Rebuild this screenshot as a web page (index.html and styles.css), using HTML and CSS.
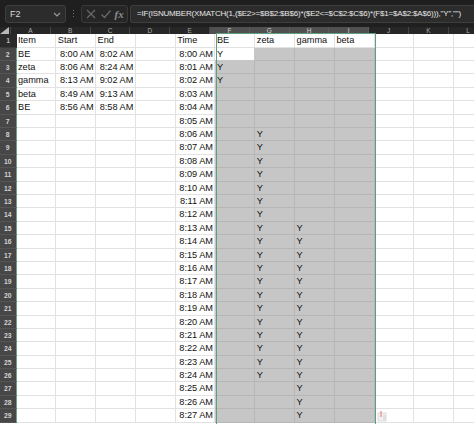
FILE: index.html
```html
<!DOCTYPE html>
<html>
<head>
<meta charset="utf-8">
<link rel="stylesheet" href="styles.css">
</head>
<body>
<div class="app">
  <div class="fbar">
    <div class="namebox"><span>F2</span><svg class="chev" width="8" height="5" viewBox="0 0 8 5"><path d="M1 1 L4 4 L7 1" fill="none" stroke="#9a9a9a" stroke-width="1.2"/></svg></div>
    <div class="dots"><i></i><i></i><i></i></div>
    <div class="fxbox">
      <svg width="12" height="12" viewBox="0 0 12 12"><path d="M2 2 L10 10 M10 2 L2 10" stroke="#6a6a6a" stroke-width="1.2"/></svg>
      <svg width="12" height="12" viewBox="0 0 12 12"><path d="M1.5 6.5 L4.5 9.5 L10.5 2.5" fill="none" stroke="#6a6a6a" stroke-width="1.2"/></svg>
      <span class="fx">fx</span>
    </div>
    <div class="formula">=IF(ISNUMBER(XMATCH(1,($E2&gt;=$B$2:$B$6)*($E2&lt;=$C$2:$C$6)*(F$1=$A$2:$A$6))),"Y","")</div>
  </div>
  <div class="sheet">
    <div class="hrow">
      <div class="corner"><svg width="9" height="7" viewBox="0 0 9 7"><path d="M9 0 L9 7 L0 7 Z" fill="#b8b8b8"/></svg></div>
      <div class="ch">A</div><div class="ch">B</div><div class="ch">C</div><div class="ch">D</div><div class="ch">E</div>
      <div class="ch hs">F</div><div class="ch hs">G</div><div class="ch hs">H</div><div class="ch hs">I</div>
      <div class="ch">J</div><div class="ch">K</div><div class="ch">L</div>
    </div>
    <div class="row"><div class="rh">1</div><div class="c">Item</div><div class="c">Start</div><div class="c">End</div><div class="c"></div><div class="c">Time</div><div class="c">BE</div><div class="c">zeta</div><div class="c">gamma</div><div class="c">beta</div><div class="c"></div><div class="c"></div><div class="c"></div></div>
    <div class="row"><div class="rh rs">2</div><div class="c">BE</div><div class="c r">8:00 AM</div><div class="c r">8:02 AM</div><div class="c"></div><div class="c r">8:00 AM</div><div class="c act">Y</div><div class="c s"></div><div class="c s"></div><div class="c s"></div><div class="c"></div><div class="c"></div><div class="c"></div></div>
    <div class="row"><div class="rh rs">3</div><div class="c">zeta</div><div class="c r">8:06 AM</div><div class="c r">8:24 AM</div><div class="c"></div><div class="c r">8:01 AM</div><div class="c s">Y</div><div class="c s"></div><div class="c s"></div><div class="c s"></div><div class="c"></div><div class="c"></div><div class="c"></div></div>
    <div class="row"><div class="rh rs">4</div><div class="c">gamma</div><div class="c r">8:13 AM</div><div class="c r">9:02 AM</div><div class="c"></div><div class="c r">8:02 AM</div><div class="c s">Y</div><div class="c s"></div><div class="c s"></div><div class="c s"></div><div class="c"></div><div class="c"></div><div class="c"></div></div>
    <div class="row"><div class="rh rs">5</div><div class="c">beta</div><div class="c r">8:49 AM</div><div class="c r">9:13 AM</div><div class="c"></div><div class="c r">8:03 AM</div><div class="c s"></div><div class="c s"></div><div class="c s"></div><div class="c s"></div><div class="c"></div><div class="c"></div><div class="c"></div></div>
    <div class="row"><div class="rh rs">6</div><div class="c">BE</div><div class="c r">8:56 AM</div><div class="c r">8:58 AM</div><div class="c"></div><div class="c r">8:04 AM</div><div class="c s"></div><div class="c s"></div><div class="c s"></div><div class="c s"></div><div class="c"></div><div class="c"></div><div class="c"></div></div>
    <div class="row"><div class="rh rs">7</div><div class="c"></div><div class="c"></div><div class="c"></div><div class="c"></div><div class="c r">8:05 AM</div><div class="c s"></div><div class="c s"></div><div class="c s"></div><div class="c s"></div><div class="c"></div><div class="c"></div><div class="c"></div></div>
    <div class="row"><div class="rh rs">8</div><div class="c"></div><div class="c"></div><div class="c"></div><div class="c"></div><div class="c r">8:06 AM</div><div class="c s"></div><div class="c s">Y</div><div class="c s"></div><div class="c s"></div><div class="c"></div><div class="c"></div><div class="c"></div></div>
    <div class="row"><div class="rh rs">9</div><div class="c"></div><div class="c"></div><div class="c"></div><div class="c"></div><div class="c r">8:07 AM</div><div class="c s"></div><div class="c s">Y</div><div class="c s"></div><div class="c s"></div><div class="c"></div><div class="c"></div><div class="c"></div></div>
    <div class="row"><div class="rh rs">10</div><div class="c"></div><div class="c"></div><div class="c"></div><div class="c"></div><div class="c r">8:08 AM</div><div class="c s"></div><div class="c s">Y</div><div class="c s"></div><div class="c s"></div><div class="c"></div><div class="c"></div><div class="c"></div></div>
    <div class="row"><div class="rh rs">11</div><div class="c"></div><div class="c"></div><div class="c"></div><div class="c"></div><div class="c r">8:09 AM</div><div class="c s"></div><div class="c s">Y</div><div class="c s"></div><div class="c s"></div><div class="c"></div><div class="c"></div><div class="c"></div></div>
    <div class="row"><div class="rh rs">12</div><div class="c"></div><div class="c"></div><div class="c"></div><div class="c"></div><div class="c r">8:10 AM</div><div class="c s"></div><div class="c s">Y</div><div class="c s"></div><div class="c s"></div><div class="c"></div><div class="c"></div><div class="c"></div></div>
    <div class="row"><div class="rh rs">13</div><div class="c"></div><div class="c"></div><div class="c"></div><div class="c"></div><div class="c r">8:11 AM</div><div class="c s"></div><div class="c s">Y</div><div class="c s"></div><div class="c s"></div><div class="c"></div><div class="c"></div><div class="c"></div></div>
    <div class="row"><div class="rh rs">14</div><div class="c"></div><div class="c"></div><div class="c"></div><div class="c"></div><div class="c r">8:12 AM</div><div class="c s"></div><div class="c s">Y</div><div class="c s"></div><div class="c s"></div><div class="c"></div><div class="c"></div><div class="c"></div></div>
    <div class="row"><div class="rh rs">15</div><div class="c"></div><div class="c"></div><div class="c"></div><div class="c"></div><div class="c r">8:13 AM</div><div class="c s"></div><div class="c s">Y</div><div class="c s">Y</div><div class="c s"></div><div class="c"></div><div class="c"></div><div class="c"></div></div>
    <div class="row"><div class="rh rs">16</div><div class="c"></div><div class="c"></div><div class="c"></div><div class="c"></div><div class="c r">8:14 AM</div><div class="c s"></div><div class="c s">Y</div><div class="c s">Y</div><div class="c s"></div><div class="c"></div><div class="c"></div><div class="c"></div></div>
    <div class="row"><div class="rh rs">17</div><div class="c"></div><div class="c"></div><div class="c"></div><div class="c"></div><div class="c r">8:15 AM</div><div class="c s"></div><div class="c s">Y</div><div class="c s">Y</div><div class="c s"></div><div class="c"></div><div class="c"></div><div class="c"></div></div>
    <div class="row"><div class="rh rs">18</div><div class="c"></div><div class="c"></div><div class="c"></div><div class="c"></div><div class="c r">8:16 AM</div><div class="c s"></div><div class="c s">Y</div><div class="c s">Y</div><div class="c s"></div><div class="c"></div><div class="c"></div><div class="c"></div></div>
    <div class="row"><div class="rh rs">19</div><div class="c"></div><div class="c"></div><div class="c"></div><div class="c"></div><div class="c r">8:17 AM</div><div class="c s"></div><div class="c s">Y</div><div class="c s">Y</div><div class="c s"></div><div class="c"></div><div class="c"></div><div class="c"></div></div>
    <div class="row"><div class="rh rs">20</div><div class="c"></div><div class="c"></div><div class="c"></div><div class="c"></div><div class="c r">8:18 AM</div><div class="c s"></div><div class="c s">Y</div><div class="c s">Y</div><div class="c s"></div><div class="c"></div><div class="c"></div><div class="c"></div></div>
    <div class="row"><div class="rh rs">21</div><div class="c"></div><div class="c"></div><div class="c"></div><div class="c"></div><div class="c r">8:19 AM</div><div class="c s"></div><div class="c s">Y</div><div class="c s">Y</div><div class="c s"></div><div class="c"></div><div class="c"></div><div class="c"></div></div>
    <div class="row"><div class="rh rs">22</div><div class="c"></div><div class="c"></div><div class="c"></div><div class="c"></div><div class="c r">8:20 AM</div><div class="c s"></div><div class="c s">Y</div><div class="c s">Y</div><div class="c s"></div><div class="c"></div><div class="c"></div><div class="c"></div></div>
    <div class="row"><div class="rh rs">23</div><div class="c"></div><div class="c"></div><div class="c"></div><div class="c"></div><div class="c r">8:21 AM</div><div class="c s"></div><div class="c s">Y</div><div class="c s">Y</div><div class="c s"></div><div class="c"></div><div class="c"></div><div class="c"></div></div>
    <div class="row"><div class="rh rs">24</div><div class="c"></div><div class="c"></div><div class="c"></div><div class="c"></div><div class="c r">8:22 AM</div><div class="c s"></div><div class="c s">Y</div><div class="c s">Y</div><div class="c s"></div><div class="c"></div><div class="c"></div><div class="c"></div></div>
    <div class="row"><div class="rh rs">25</div><div class="c"></div><div class="c"></div><div class="c"></div><div class="c"></div><div class="c r">8:23 AM</div><div class="c s"></div><div class="c s">Y</div><div class="c s">Y</div><div class="c s"></div><div class="c"></div><div class="c"></div><div class="c"></div></div>
    <div class="row"><div class="rh rs">26</div><div class="c"></div><div class="c"></div><div class="c"></div><div class="c"></div><div class="c r">8:24 AM</div><div class="c s"></div><div class="c s">Y</div><div class="c s">Y</div><div class="c s"></div><div class="c"></div><div class="c"></div><div class="c"></div></div>
    <div class="row"><div class="rh rs">27</div><div class="c"></div><div class="c"></div><div class="c"></div><div class="c"></div><div class="c r">8:25 AM</div><div class="c s"></div><div class="c s"></div><div class="c s">Y</div><div class="c s"></div><div class="c"></div><div class="c"></div><div class="c"></div></div>
    <div class="row"><div class="rh rs">28</div><div class="c"></div><div class="c"></div><div class="c"></div><div class="c"></div><div class="c r">8:26 AM</div><div class="c s"></div><div class="c s"></div><div class="c s">Y</div><div class="c s"></div><div class="c"></div><div class="c"></div><div class="c"></div></div>
    <div class="row"><div class="rh rs">29</div><div class="c"></div><div class="c"></div><div class="c"></div><div class="c"></div><div class="c r">8:27 AM</div><div class="c s"></div><div class="c s"></div><div class="c s">Y</div><div class="c s"></div><div class="c"></div><div class="c"></div><div class="c"></div></div>
    <div class="selbox"></div>
    <svg class="qa" width="12" height="12" viewBox="0 0 12 12"><rect x="1" y="3" width="8" height="8" fill="#e8e8e8" stroke="#bbb" stroke-width="0.8"/><path d="M4 1 L4 7" stroke="#d9534f" stroke-width="1.4"/><rect x="6" y="5" width="3" height="5" fill="#c9c9c9"/></svg>
  </div>
</div>
</body>
</html>
```
FILE: styles.css
```css
* { box-sizing: border-box; }
html, body { margin: 0; padding: 0; background: #ffffff; }
.app { width: 474px; height: 424px; overflow: hidden; font-family: "Liberation Sans", Arial, sans-serif; }

.fbar { height: 27px; background: #1f1f1f; display: flex; align-items: center; padding: 0 0 0 5px; gap: 0; }
.namebox { width: 61px; height: 18px; background: #2c2c2c; border: 1px solid #3e3e3e; border-radius: 3px; display: flex; align-items: center; justify-content: space-between; padding: 0 4px 0 4px; color: #d8d8d8; font-size: 9px; }
.chev { margin-top: 1px; }
.dots { width: 15px; display: flex; flex-direction: column; align-items: center; gap: 1.5px; }
.dots i { display: block; width: 1.6px; height: 1.6px; background: #8a8a8a; border-radius: 50%; }
.fxbox { width: 47px; height: 18px; background: #262626; border: 1px solid #3a3a3a; border-radius: 3px; display: flex; align-items: center; justify-content: space-around; padding: 0 2px; }
.fx { font-family: "Liberation Serif", serif; font-style: italic; color: #8c8c8c; font-size: 11px; font-weight: bold; }
.formula { flex: 1; height: 18px; margin-left: 2px; background: #2c2c2c; border: 1px solid #3e3e3e; border-right: none; border-radius: 3px 0 0 3px; color: #e6e6e6; font-size: 8px; line-height: 16px; padding-left: 6px; white-space: nowrap; overflow: hidden; letter-spacing: -0.18px; }

.sheet { position: relative; }
.hrow { display: flex; height: 7.3px; background: #262626; }
.corner { width: 16.5px; height: 7.3px; display: flex; align-items: flex-end; justify-content: flex-end; padding: 0 1px 0 0; border-right: 1px solid #444; }
.ch { width: 39.8px; flex: none; height: 7.3px; color: #a8a8a8; font-size: 6.5px; line-height: 7.3px; text-align: center; border-right: 1px solid #454545; }
.ch.hs { background: #505050; color: #d0d0d0; border-right-color: #5c5c5c; }

.row { display: flex; height: 13.4px; }
.rh { width: 16.5px; flex: none; background: #2a2a2a; color: #b8b8b8; font-size: 6.8px; font-weight: bold; line-height: 13.4px; text-align: center; border-bottom: 1px solid #3a3a3a; }
.rh.rs { background: #474747; color: #d2d2d2; border-right: 1px solid #6aa386; border-bottom-color: #555; }
.c { width: 39.8px; flex: none; height: 13.4px; border-right: 1px solid #e2e2e2; border-bottom: 1px solid #e2e2e2; font-size: 9.2px; line-height: 13.4px; color: #111; padding: 0 1.5px; white-space: nowrap; overflow: visible; }
.c.r { text-align: right; }
.c.s { background: #c6c6c6; border-right-color: #b6b6b6; border-bottom-color: #b6b6b6; }
.c.act { background: #ffffff; border-right-color: #c6c6c6; border-bottom-color: #c6c6c6; }

.selbox { position: absolute; left: 215.5px; top: 6.3px; width: 160.2px; height: 420px; border: 1.5px solid #5f9f80; pointer-events: none; }
.qa { position: absolute; left: 377px; top: 383px; opacity: 0.6; }
```
